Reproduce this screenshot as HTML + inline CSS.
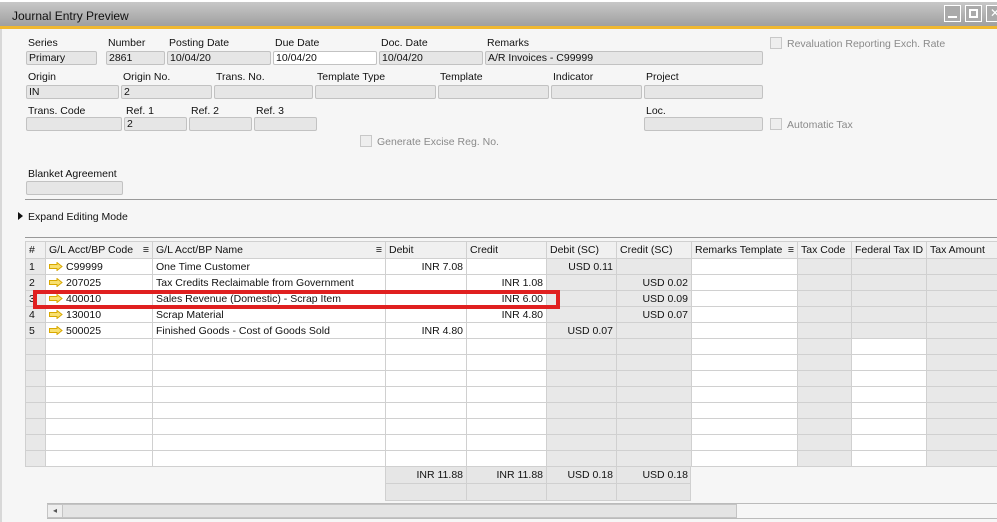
<!DOCTYPE html>
<html><head><style>
*{margin:0;padding:0;box-sizing:border-box}
body{width:997px;height:522px;background:#f6f6f6;font-family:"Liberation Sans",Arial,sans-serif;font-size:10.5px;color:#111;position:relative;overflow:hidden}
.a{position:absolute}
.f{position:absolute;height:14px;background:#e6e6e6;border:1px solid #c2c2c2;border-radius:2px;padding-left:2px;line-height:12px;white-space:nowrap}
.l{position:absolute;white-space:nowrap}
.cb{position:absolute;width:12px;height:12px;border:1px solid #c8c8c8;background:#eee}
.g{color:#8a8a8a}
table{border-collapse:collapse;position:absolute;left:25px;top:241px;table-layout:fixed;width:972px}
td{border:1px solid #d0d0d0;height:16px;line-height:14px;padding:0 3px;white-space:nowrap;overflow:hidden;background:#fff}
tr.h td{background:#f0f0f0;height:17px}
.r{text-align:right}
.x{background:#e8e8e8}
.ar{display:inline-block;width:14px;height:9px;vertical-align:-1px;margin-right:3px}
</style></head><body>
<div class="a" style="left:0;top:0;width:997px;height:29px;background:linear-gradient(#c8c8c8,#9a9a9a);border-top:2px solid #fff"></div>
<div class="a" style="left:0;top:26px;width:997px;height:3px;background:#f0b830"></div>
<div class="l" style="left:12px;top:9px;font-size:12px;color:#111">Journal Entry Preview</div>
<div class="a" style="left:944px;top:5px;width:17px;height:17px;border:1px solid #fff;background:#aaa"><div class="a" style="left:3px;top:10px;width:9px;height:2px;background:#fff"></div></div>
<div class="a" style="left:965px;top:5px;width:17px;height:17px;border:1px solid #fff;background:#aaa"><div class="a" style="left:3px;top:3px;width:9px;height:9px;border:2px solid #fff"></div></div>
<div class="a" style="left:986px;top:5px;width:17px;height:17px;border:1px solid #fff;background:#aaa;color:#fff;font-size:12px;line-height:14px;padding-left:3px">✕</div>
<div class="a" style="left:0;top:29px;width:2px;height:493px;background:#d8d8d8"></div>

<div class="l" style="left:28px;top:37px">Series</div><div class="l" style="left:108px;top:37px">Number</div><div class="l" style="left:169px;top:37px">Posting Date</div><div class="l" style="left:275px;top:37px">Due Date</div><div class="l" style="left:381px;top:37px">Doc. Date</div><div class="l" style="left:487px;top:37px">Remarks</div>
<div class="f" style="left:26px;top:51px;width:71px">Primary</div><div class="f" style="left:106px;top:51px;width:59px">2861</div><div class="f" style="left:167px;top:51px;width:104px">10/04/20</div><div class="f" style="left:273px;top:51px;width:104px;background:#fff">10/04/20</div><div class="f" style="left:379px;top:51px;width:104px">10/04/20</div><div class="f" style="left:485px;top:51px;width:278px">A/R Invoices - C99999</div>
<div class="cb" style="left:770px;top:37px"></div><div class="l g" style="left:787px;top:38px">Revaluation Reporting Exch. Rate</div>

<div class="l" style="left:28px;top:71px">Origin</div><div class="l" style="left:123px;top:71px">Origin No.</div><div class="l" style="left:216px;top:71px">Trans. No.</div><div class="l" style="left:317px;top:71px">Template Type</div><div class="l" style="left:440px;top:71px">Template</div><div class="l" style="left:553px;top:71px">Indicator</div><div class="l" style="left:646px;top:71px">Project</div>
<div class="f" style="left:26px;top:85px;width:93px">IN</div><div class="f" style="left:121px;top:85px;width:91px">2</div><div class="f" style="left:214px;top:85px;width:99px"></div><div class="f" style="left:315px;top:85px;width:121px"></div><div class="f" style="left:438px;top:85px;width:111px"></div><div class="f" style="left:551px;top:85px;width:91px"></div><div class="f" style="left:644px;top:85px;width:119px"></div>

<div class="l" style="left:28px;top:105px">Trans. Code</div><div class="l" style="left:126px;top:105px">Ref. 1</div><div class="l" style="left:191px;top:105px">Ref. 2</div><div class="l" style="left:256px;top:105px">Ref. 3</div><div class="l" style="left:646px;top:105px">Loc.</div>
<div class="f" style="left:26px;top:117px;width:96px"></div><div class="f" style="left:124px;top:117px;width:63px">2</div><div class="f" style="left:189px;top:117px;width:63px"></div><div class="f" style="left:254px;top:117px;width:63px"></div><div class="f" style="left:644px;top:117px;width:119px"></div>
<div class="cb" style="left:770px;top:118px"></div><div class="l g" style="left:787px;top:119px">Automatic Tax</div>
<div class="cb" style="left:360px;top:135px"></div><div class="l g" style="left:377px;top:136px">Generate Excise Reg. No.</div>

<div class="l" style="left:28px;top:168px">Blanket Agreement</div>
<div class="f" style="left:26px;top:181px;width:97px"></div>
<div class="a" style="left:25px;top:199px;width:972px;height:1px;background:#999"></div>
<div class="a" style="left:18px;top:212px;width:0;height:0;border-top:4px solid transparent;border-bottom:4px solid transparent;border-left:5px solid #111"></div>
<div class="l" style="left:28px;top:211px">Expand Editing Mode</div>
<div class="a" style="left:25px;top:237px;width:972px;height:1px;background:#999"></div>

<table>
<colgroup><col style="width:20px"><col style="width:107px"><col style="width:233px"><col style="width:81px"><col style="width:80px"><col style="width:70px"><col style="width:75px"><col style="width:106px"><col style="width:54px"><col style="width:75px"><col style="width:71px"></colgroup>
<tr class="h"><td>#</td><td>G/L Acct/BP Code<span style="float:right">≡</span></td><td>G/L Acct/BP Name<span style="float:right">≡</span></td><td>Debit</td><td>Credit</td><td>Debit (SC)</td><td>Credit (SC)</td><td>Remarks Template<span style="float:right">≡</span></td><td>Tax Code</td><td>Federal Tax ID</td><td>Tax Amount</td></tr>
<tr><td class="x">1</td><td><svg class="ar" viewBox="0 0 14 9"><path d="M0.5 2.5H8V0.5L13 4.5L8 8.5V6.5H0.5Z" fill="#f8e070" stroke="#d8a800"/></svg>C99999</td><td>One Time Customer</td><td class="r">INR 7.08</td><td></td><td class="x r">USD 0.11</td><td class="x"></td><td></td><td class="x"></td><td class="x"></td><td class="x"></td></tr>
<tr><td class="x">2</td><td><svg class="ar" viewBox="0 0 14 9"><path d="M0.5 2.5H8V0.5L13 4.5L8 8.5V6.5H0.5Z" fill="#f8e070" stroke="#d8a800"/></svg>207025</td><td>Tax Credits Reclaimable from Government</td><td></td><td class="r">INR 1.08</td><td class="x"></td><td class="x r">USD 0.02</td><td></td><td class="x"></td><td class="x"></td><td class="x"></td></tr>
<tr><td class="x">3</td><td><svg class="ar" viewBox="0 0 14 9"><path d="M0.5 2.5H8V0.5L13 4.5L8 8.5V6.5H0.5Z" fill="#f8e070" stroke="#d8a800"/></svg>400010</td><td>Sales Revenue (Domestic) - Scrap Item</td><td></td><td class="r">INR 6.00</td><td class="x"></td><td class="x r">USD 0.09</td><td></td><td class="x"></td><td class="x"></td><td class="x"></td></tr>
<tr><td class="x">4</td><td><svg class="ar" viewBox="0 0 14 9"><path d="M0.5 2.5H8V0.5L13 4.5L8 8.5V6.5H0.5Z" fill="#f8e070" stroke="#d8a800"/></svg>130010</td><td>Scrap Material</td><td></td><td class="r">INR 4.80</td><td class="x"></td><td class="x r">USD 0.07</td><td></td><td class="x"></td><td class="x"></td><td class="x"></td></tr>
<tr><td class="x">5</td><td><svg class="ar" viewBox="0 0 14 9"><path d="M0.5 2.5H8V0.5L13 4.5L8 8.5V6.5H0.5Z" fill="#f8e070" stroke="#d8a800"/></svg>500025</td><td>Finished Goods - Cost of Goods Sold</td><td class="r">INR 4.80</td><td></td><td class="x r">USD 0.07</td><td class="x"></td><td></td><td class="x"></td><td class="x"></td><td class="x"></td></tr>
<tr><td class="x"></td><td></td><td></td><td></td><td></td><td class="x"></td><td class="x"></td><td></td><td class="x"></td><td></td><td class="x"></td></tr>
<tr><td class="x"></td><td></td><td></td><td></td><td></td><td class="x"></td><td class="x"></td><td></td><td class="x"></td><td></td><td class="x"></td></tr>
<tr><td class="x"></td><td></td><td></td><td></td><td></td><td class="x"></td><td class="x"></td><td></td><td class="x"></td><td></td><td class="x"></td></tr>
<tr><td class="x"></td><td></td><td></td><td></td><td></td><td class="x"></td><td class="x"></td><td></td><td class="x"></td><td></td><td class="x"></td></tr>
<tr><td class="x"></td><td></td><td></td><td></td><td></td><td class="x"></td><td class="x"></td><td></td><td class="x"></td><td></td><td class="x"></td></tr>
<tr><td class="x"></td><td></td><td></td><td></td><td></td><td class="x"></td><td class="x"></td><td></td><td class="x"></td><td></td><td class="x"></td></tr>
<tr><td class="x"></td><td></td><td></td><td></td><td></td><td class="x"></td><td class="x"></td><td></td><td class="x"></td><td></td><td class="x"></td></tr>
<tr><td class="x"></td><td></td><td></td><td></td><td></td><td class="x"></td><td class="x"></td><td></td><td class="x"></td><td></td><td class="x"></td></tr>
</table>

<div class="a" style="left:385px;top:467px;width:306px;height:34px;background:#e6e6e6"></div>
<div class="a" style="left:385px;top:467px;width:306px;height:34px;border:1px solid #d0d0d0;border-top:none"></div>
<div class="a" style="left:466px;top:467px;width:1px;height:34px;background:#d0d0d0"></div>
<div class="a" style="left:546px;top:467px;width:1px;height:34px;background:#d0d0d0"></div>
<div class="a" style="left:616px;top:467px;width:1px;height:34px;background:#d0d0d0"></div>
<div class="a" style="left:385px;top:483px;width:306px;height:1px;background:#d0d0d0"></div>
<div class="l" style="left:385px;top:469px;width:78px;text-align:right">INR 11.88</div>
<div class="l" style="left:466px;top:469px;width:77px;text-align:right">INR 11.88</div>
<div class="l" style="left:546px;top:469px;width:67px;text-align:right">USD 0.18</div>
<div class="l" style="left:616px;top:469px;width:72px;text-align:right">USD 0.18</div>

<div class="a" style="left:47px;top:503px;width:950px;height:16px;border-top:1px solid #bbb;border-bottom:1px solid #bbb;background:#f6f6f6"></div>
<div class="a" style="left:47px;top:504px;width:690px;height:14px;background:#e4e4e4;border:1px solid #c4c4c4"></div>
<div class="a" style="left:47px;top:504px;width:16px;height:14px;background:#eee;border:1px solid #c4c4c4;font-size:8px;line-height:12px;text-align:center;color:#555">◂</div>

<div class="a" style="left:33px;top:290px;width:527px;height:19px;border:4px solid #e02020"></div>
</body></html>
